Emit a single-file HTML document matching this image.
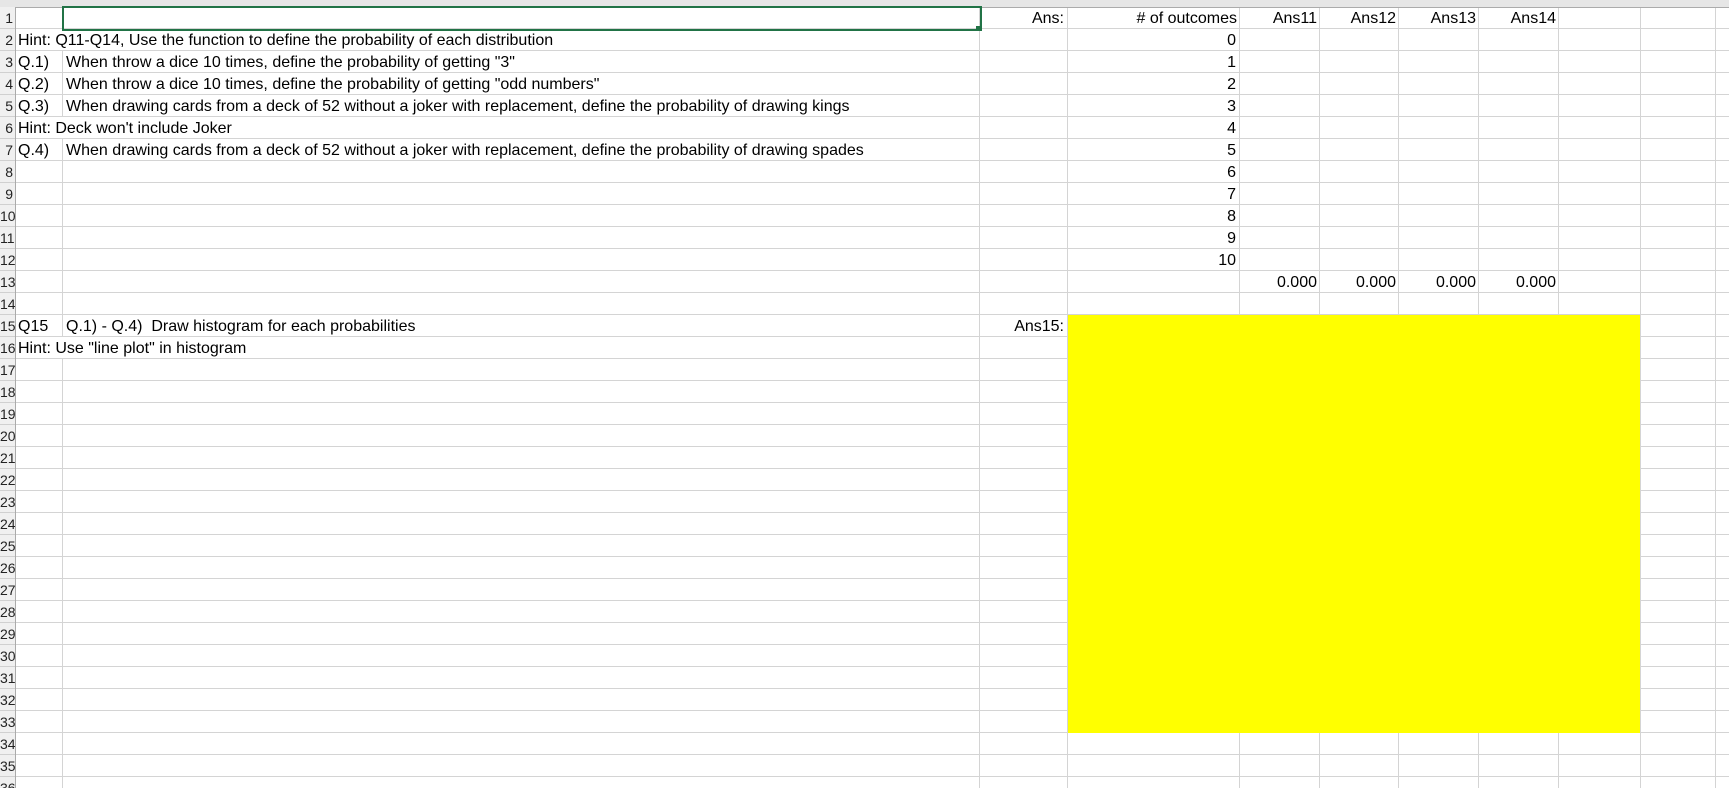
<!DOCTYPE html>
<html><head><style>
body{margin:0;width:1729px;height:788px;overflow:hidden;background:#fff;font-family:"Liberation Sans",Arial,sans-serif;font-size:16px;color:#000;position:relative}
.grid{position:absolute;left:15px;top:7px;width:1714px;height:781px;background:repeating-linear-gradient(to bottom,transparent 0,transparent 21px,#d4d4d4 21px,#d4d4d4 22px)}
.v{position:absolute;top:7px;height:781px;width:1px;background:#d4d4d4}
.hdr{position:absolute;left:0;top:0;width:1729px;height:7px;background:#e6e6e6;border-bottom:1px solid #ababab}
.rh{position:absolute;left:0;top:7px;width:15px;height:781px;background:#f0f0f0;border-right:1px solid #ababab;overflow:hidden}
.rh div{height:22px;line-height:22px;font-size:14px;text-align:right;padding-right:2px;box-sizing:border-box;border-bottom:1px solid #d0d0d0;color:#222}
.t{position:absolute;height:22px;line-height:23px;white-space:nowrap}
.r{text-align:right}
.w{position:absolute;left:61px;width:3px;height:21px;background:#fff}
</style></head><body>
<div class="grid"></div>
<div class="v" style="left:62px"></div>
<div class="v" style="left:979px"></div>
<div class="v" style="left:1067px"></div>
<div class="v" style="left:1239px"></div>
<div class="v" style="left:1319px"></div>
<div class="v" style="left:1398px"></div>
<div class="v" style="left:1478px"></div>
<div class="v" style="left:1558px"></div>
<div class="v" style="left:1640px"></div>
<div class="v" style="left:1715px"></div>
<div class="w" style="top:29px"></div>
<div class="w" style="top:117px"></div>
<div class="w" style="top:337px"></div>
<div style="position:absolute;left:1068px;top:315px;width:572px;height:418px;background:#ffff00"></div>
<div class="hdr"></div>
<div class="rh">
<div>1</div><div>2</div><div>3</div><div>4</div><div>5</div><div>6</div><div>7</div><div>8</div><div>9</div><div>10</div><div>11</div><div>12</div><div>13</div><div>14</div><div>15</div><div>16</div><div>17</div><div>18</div><div>19</div><div>20</div><div>21</div><div>22</div><div>23</div><div>24</div><div>25</div><div>26</div><div>27</div><div>28</div><div>29</div><div>30</div><div>31</div><div>32</div><div>33</div><div>34</div><div>35</div><div>36</div>
</div>
<div style="position:absolute;left:62px;top:6px;width:916px;height:21px;border:2px solid #217346"></div>
<div style="position:absolute;left:976px;top:26px;width:5px;height:5px;background:#217346"></div>
<div class="t" style="left:18px;top:29px">Hint: Q11-Q14, Use the function to define the probability of each distribution</div>
<div class="t" style="left:18px;top:51px">Q.1)</div><div class="t" style="left:66px;top:51px">When throw a dice 10 times, define the probability of getting "3"</div>
<div class="t" style="left:18px;top:73px">Q.2)</div><div class="t" style="left:66px;top:73px">When throw a dice 10 times, define the probability of getting "odd numbers"</div>
<div class="t" style="left:18px;top:95px">Q.3)</div><div class="t" style="left:66px;top:95px">When drawing cards from a deck of 52 without a joker with replacement, define the probability of drawing kings</div>
<div class="t" style="left:18px;top:117px">Hint: Deck won't include Joker</div>
<div class="t" style="left:18px;top:139px">Q.4)</div><div class="t" style="left:66px;top:139px">When drawing cards from a deck of 52 without a joker with replacement, define the probability of drawing spades</div>
<div class="t" style="left:18px;top:315px">Q15</div><div class="t" style="left:66px;top:315px">Q.1) - Q.4)&nbsp; Draw histogram for each probabilities</div>
<div class="t" style="left:18px;top:337px">Hint: Use "line plot" in histogram</div>
<div class="t r" style="left:980px;width:84px;top:7px">Ans:</div>
<div class="t r" style="left:1068px;width:169px;top:7px"># of outcomes</div>
<div class="t r" style="left:1240px;width:77px;top:7px">Ans11</div>
<div class="t r" style="left:1320px;width:76px;top:7px">Ans12</div>
<div class="t r" style="left:1399px;width:77px;top:7px">Ans13</div>
<div class="t r" style="left:1479px;width:77px;top:7px">Ans14</div>
<div class="t r" style="left:1068px;width:168px;top:29px">0</div>
<div class="t r" style="left:1068px;width:168px;top:51px">1</div>
<div class="t r" style="left:1068px;width:168px;top:73px">2</div>
<div class="t r" style="left:1068px;width:168px;top:95px">3</div>
<div class="t r" style="left:1068px;width:168px;top:117px">4</div>
<div class="t r" style="left:1068px;width:168px;top:139px">5</div>
<div class="t r" style="left:1068px;width:168px;top:161px">6</div>
<div class="t r" style="left:1068px;width:168px;top:183px">7</div>
<div class="t r" style="left:1068px;width:168px;top:205px">8</div>
<div class="t r" style="left:1068px;width:168px;top:227px">9</div>
<div class="t r" style="left:1068px;width:168px;top:249px">10</div>
<div class="t r" style="left:1240px;width:77px;top:271px">0.000</div>
<div class="t r" style="left:1320px;width:76px;top:271px">0.000</div>
<div class="t r" style="left:1399px;width:77px;top:271px">0.000</div>
<div class="t r" style="left:1479px;width:77px;top:271px">0.000</div>
<div class="t r" style="left:980px;width:84px;top:315px">Ans15:</div>
</body></html>
